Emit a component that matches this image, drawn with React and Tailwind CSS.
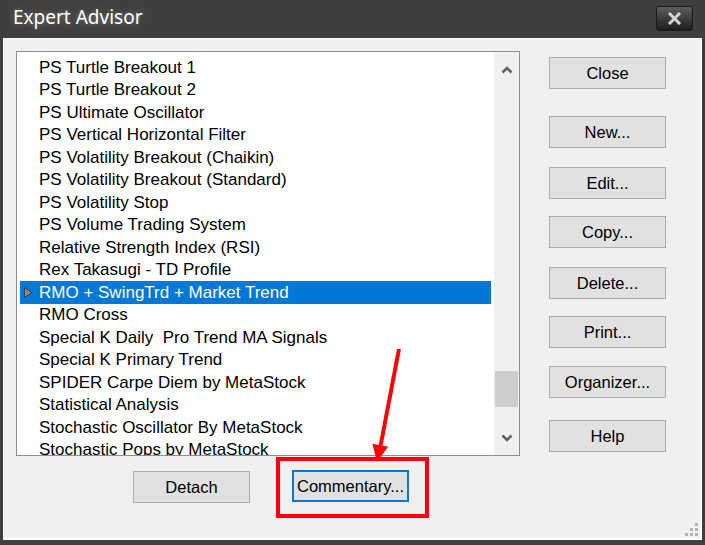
import React from 'react';

const ITEMS = [
  'PS Turtle Breakout 1',
  'PS Turtle Breakout 2',
  'PS Ultimate Oscillator',
  'PS Vertical Horizontal Filter',
  'PS Volatility Breakout (Chaikin)',
  'PS Volatility Breakout (Standard)',
  'PS Volatility Stop',
  'PS Volume Trading System',
  'Relative Strength Index (RSI)',
  'Rex Takasugi - TD Profile',
  'RMO + SwingTrd + Market Trend',
  'RMO Cross',
  'Special K Daily\u00a0 Pro Trend MA Signals',
  'Special K Primary Trend',
  'SPIDER Carpe Diem by MetaStock',
  'Statistical Analysis',
  'Stochastic Oscillator By MetaStock',
  'Stochastic Pops by MetaStock'
];

const SELECTED = 10;

// top margins reproduce the uneven spacing of the original dialog
const SIDE_BUTTONS = [
  { label: 'Close', mt: 'mt-[6px]' },
  { label: 'New...', mt: 'mt-[27px]' },
  { label: 'Edit...', mt: 'mt-[19px]' },
  { label: 'Copy...', mt: 'mt-[17px]' },
  { label: 'Delete...', mt: 'mt-[19px]' },
  { label: 'Print...', mt: 'mt-[17px]' },
  { label: 'Organizer...', mt: 'mt-[18px]' },
  { label: 'Help', mt: 'mt-[22px]' }
];

function WinButton({ children, className = '', focused = false }) {
  return (
    <button
      type="button"
      className={`h-[32px] w-[117px] bg-[#e1e1e1] text-black text-[16.5px] leading-none flex items-center justify-center ${
        focused ? 'border-2 border-[#0078d7]' : 'border border-[#adadad]'
      } ${className}`}
    >
      {children}
    </button>
  );
}

function Chevron({ up }) {
  return (
    <svg width="12" height="8" viewBox="0 0 12 8">
      <polyline
        points={up ? '1.5,6.5 6,2 10.5,6.5' : '1.5,1.5 6,6 10.5,1.5'}
        fill="none"
        stroke="#606060"
        strokeWidth="2.6"
      />
    </svg>
  );
}

function ListBox() {
  return (
    <div className="w-[504px] h-[405px] border border-[#8a8d93] bg-white flex overflow-hidden">
      <div className="flex-1 pt-[4px] overflow-hidden">
        {ITEMS.map((item, i) => {
          const sel = i === SELECTED;
          return (
            <div
              key={item}
              className={`h-[22.5px] mx-[3px] pl-[19px] relative flex items-center whitespace-nowrap text-[17px] ${
                sel ? 'bg-[#0078d7] text-white' : 'text-black'
              }`}
            >
              {sel && (
                <svg className="absolute left-[4px] top-[6px]" width="9" height="11" viewBox="0 0 9 11">
                  <polygon points="0.5,0.5 8,5.5 0.5,10.5" fill="#8c8c8c" stroke="#3c3c3c" strokeWidth="1" />
                </svg>
              )}
              {item}
            </div>
          );
        })}
      </div>
      <div className="w-[25px] bg-[#f0f0f0] flex flex-col">
        <div className="h-[35px] flex items-center justify-center">
          <Chevron up />
        </div>
        <div className="flex-1">
          <div className="mt-[284px] h-[36px] mx-[1px] bg-[#cdcdcd]" />
        </div>
        <div className="h-[35px] flex items-center justify-center">
          <Chevron />
        </div>
      </div>
    </div>
  );
}

export default function App() {
  return (
    <div
      className="relative w-[705px] h-[545px] bg-[#3f3f3f] flex flex-col overflow-hidden"
      style={{ fontFamily: '"Liberation Sans", Arial, sans-serif' }}
    >
      <div className="h-[38px] shrink-0 flex items-center justify-between pl-[13px] pr-[12px]">
        <span
          className="text-white text-[19px] -mt-[3px] [text-shadow:0_0_6px_rgba(255,255,255,0.35)]"
          style={{ fontFamily: '"Noto Sans", "Open Sans", sans-serif' }}
        >
          Expert Advisor
        </span>
        <div className="w-[37px] h-[25px] -mt-[2px] rounded-[3px] border border-[#1a1a1a] bg-linear-to-b from-[#5e5e5e] to-[#1e1e1e] flex items-center justify-center">
          <svg width="13" height="13" viewBox="0 0 13 13">
            <path d="M2 2 L11 11 M11 2 L2 11" stroke="#d4d4d4" strokeWidth="3" strokeLinecap="square" />
          </svg>
        </div>
      </div>

      <div className="relative mx-[3px] h-[502px] shrink-0 bg-[#f0f0f0] border-l border-t border-[#f8f8f8] border-r-2 border-b-2 border-r-white border-b-white pl-[12px] pt-[12px] flex flex-col">
        <div className="flex">
          <ListBox />
          <div className="ml-[29px] flex flex-col">
            {SIDE_BUTTONS.map(b => (
              <WinButton key={b.label} className={b.mt}>
                {b.label}
              </WinButton>
            ))}
          </div>
        </div>

        <div className="flex items-start">
          <WinButton className="mt-[15px] ml-[117px]">Detach</WinButton>
          <div className="mt-[1px] ml-[26px] border-4 border-[#ff0000] pl-[12px] pr-[16px] pt-[9px] pb-[12px]">
            <WinButton focused>Commentary...</WinButton>
          </div>
        </div>

        {/* size grip */}
        <div className="absolute right-[2px] bottom-[2px] grid grid-cols-3 gap-[2px]">
          <span className="w-[3px] h-[3px]" />
          <span className="w-[3px] h-[3px]" />
          <span className="w-[3px] h-[3px] bg-[#b4b4b4]" />
          <span className="w-[3px] h-[3px]" />
          <span className="w-[3px] h-[3px] bg-[#b4b4b4]" />
          <span className="w-[3px] h-[3px] bg-[#b4b4b4]" />
          <span className="w-[3px] h-[3px] bg-[#b4b4b4]" />
          <span className="w-[3px] h-[3px] bg-[#b4b4b4]" />
          <span className="w-[3px] h-[3px] bg-[#b4b4b4]" />
        </div>
      </div>

      {/* red annotation arrow */}
      <svg className="absolute left-0 top-0 pointer-events-none" width="705" height="545">
        <line x1="399" y1="349" x2="380.5" y2="446" stroke="#ff0000" strokeWidth="4" />
        <polygon points="377,462 372.4,443.8 388.1,446.8" fill="#ff0000" />
      </svg>
    </div>
  );
}
